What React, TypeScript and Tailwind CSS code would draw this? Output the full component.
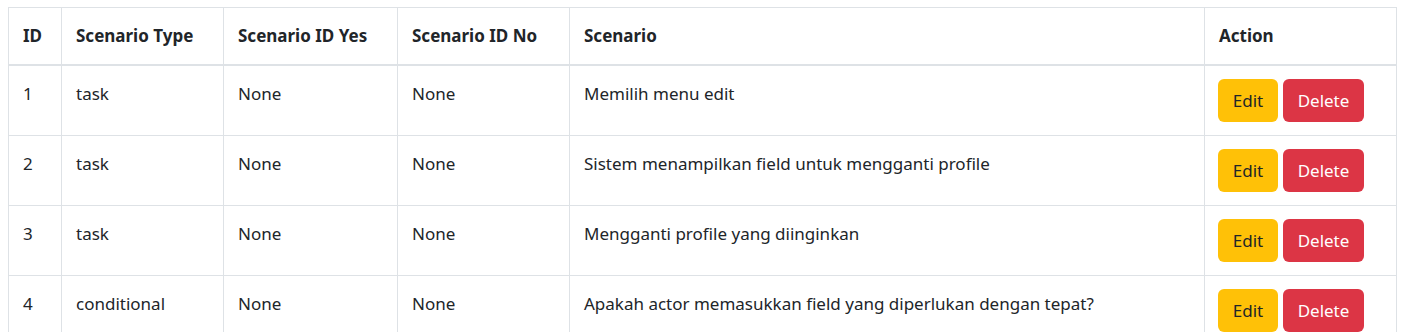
import React from 'react';

interface Row {
  id: number;
  type: string;
  yes: string;
  no: string;
  scenario: string;
}

const rows: Row[] = [
  { id: 1, type: 'task', yes: 'None', no: 'None', scenario: 'Memilih menu edit' },
  { id: 2, type: 'task', yes: 'None', no: 'None', scenario: 'Sistem menampilkan field untuk mengganti profile' },
  { id: 3, type: 'task', yes: 'None', no: 'None', scenario: 'Mengganti profile yang diinginkan' },
  { id: 4, type: 'conditional', yes: 'None', no: 'None', scenario: 'Apakah actor memasukkan field yang diperlukan dengan tepat?' },
];

const th = 'border border-[#dee2e6] border-b-2 px-[14px] py-4 text-left font-bold align-top';
const td = 'border border-[#dee2e6] px-[14px] py-4 align-top';

const App: React.FC = () => {
  return (
    <div className="bg-white min-h-screen pl-2 pt-[7px] pr-[10px] text-[17px] leading-6 text-[#212529] font-['Noto_Sans',sans-serif]">
      <table className="w-[1388px] table-fixed border-collapse">
        <colgroup>
          <col className="w-[53px]" />
          <col className="w-[162px]" />
          <col className="w-[174px]" />
          <col className="w-[172px]" />
          <col className="w-[635px]" />
          <col className="w-[192px]" />
        </colgroup>
        <thead>
          <tr>
            <th className={th}>ID</th>
            <th className={th}>Scenario Type</th>
            <th className={th}>Scenario ID Yes</th>
            <th className={th}>Scenario ID No</th>
            <th className={th}>Scenario</th>
            <th className={th}>Action</th>
          </tr>
        </thead>
        <tbody>
          {rows.map((r) => (
            <tr key={r.id}>
              <td className={td}>{r.id}</td>
              <td className={td}>{r.type}</td>
              <td className={td}>{r.yes}</td>
              <td className={td}>{r.no}</td>
              <td className={td}>{r.scenario}</td>
              <td className="border border-[#dee2e6] px-[13px] py-[13px] align-top">
                <div className="flex gap-[5px]">
                  <button className="h-[43px] w-[60px] rounded-[6px] bg-[#ffc107] text-[#212529]">Edit</button>
                  <button className="h-[43px] w-[81px] rounded-[6px] bg-[#dc3545] text-white">Delete</button>
                </div>
              </td>
            </tr>
          ))}
        </tbody>
      </table>
    </div>
  );
};

export default App;
